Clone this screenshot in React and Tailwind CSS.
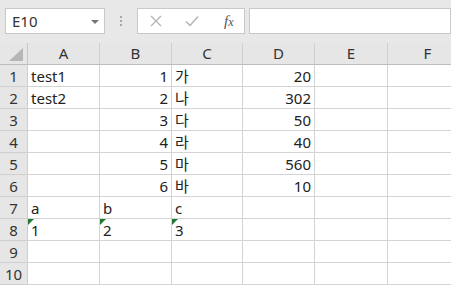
import React from 'react';

const cols = ['A', 'B', 'C', 'D', 'E', 'F'];
const widths = ['w-[72px]', 'w-[72px]', 'w-[71px]', 'w-[72px]', 'w-[73px]', 'w-[80px]'];

// cell values: [text, align, flag]
const rows = [
  [['test1'], ['1', 'r'], ['가'], ['20', 'r'], [], []],
  [['test2'], ['2', 'r'], ['나'], ['302', 'r'], [], []],
  [[], ['3', 'r'], ['다'], ['50', 'r'], [], []],
  [[], ['4', 'r'], ['라'], ['40', 'r'], [], []],
  [[], ['5', 'r'], ['마'], ['560', 'r'], [], []],
  [[], ['6', 'r'], ['바'], ['10', 'r'], [], []],
  [['a'], ['b'], ['c'], [], [], []],
  [['1', 'l', true], ['2', 'l', true], ['3', 'l', true], [], [], []],
  [[], [], [], [], [], []],
  [[], [], [], [], [], []],
];

function Cell({ value, width }) {
  const [text, align, flag] = value;
  return (
    <div
      className={`${width} relative h-[22px] shrink-0 border-r border-b border-[#d4d4d4] flex items-end ${
        align === 'r' ? 'justify-end pr-[3px]' : 'justify-start pl-[3px]'
      }`}
    >
      {flag && (
        <div className="absolute left-0 top-0 w-0 h-0 border-t-[6px] border-t-[#1e7b34] border-r-[6px] border-r-transparent" />
      )}
      <span className="leading-[19px]">{text}</span>
    </div>
  );
}

export default function App() {
  return (
    <div
      className="w-[451px] h-[287px] overflow-hidden bg-white text-[15px] text-[#222]"
      style={{ fontFamily: '"Noto Sans", "Noto Sans CJK KR", sans-serif' }}
    >
      {/* formula bar */}
      <div className="h-[43px] bg-[#e8e8e8] flex items-start pt-[8px] pl-[5px]">
        <div className="w-[100px] h-[26px] bg-white border border-[#c8c8c8] flex items-center justify-between pl-[6px] pr-[5px]">
          <span className="text-[15px] text-[#333]">E10</span>
          <div className="w-0 h-0 border-l-[4px] border-l-transparent border-r-[4px] border-r-transparent border-t-[4px] border-t-[#777] mt-[1px]" />
        </div>
        <div className="w-[32px] h-[26px] flex flex-col items-center justify-center gap-[2px]">
          <div className="w-[2px] h-[2px] bg-[#a8a8a8]" />
          <div className="w-[2px] h-[2px] bg-[#a8a8a8]" />
          <div className="w-[2px] h-[2px] bg-[#a8a8a8]" />
        </div>
        <div className="w-[108px] h-[26px] bg-white border border-[#c8c8c8] flex items-center">
          <svg width="12" height="12" viewBox="0 0 12 12" className="ml-[12px]">
            <path d="M1 1 L11 11 M11 1 L1 11" stroke="#b4b4b4" strokeWidth="1.3" fill="none" />
          </svg>
          <svg width="14" height="12" viewBox="0 0 14 12" className="ml-[23px]">
            <path d="M1 6.5 L5 10.5 L13 1.5" stroke="#b4b4b4" strokeWidth="1.5" fill="none" />
          </svg>
          <span
            className="ml-[25px] text-[15px] italic text-[#555] leading-none"
            style={{ fontFamily: '"Liberation Serif", serif' }}
          >
            f<span className="text-[12px]">x</span>
          </span>
        </div>
        <div className="ml-[4px] flex-1 h-[26px] bg-white border border-[#c8c8c8]" />
      </div>

      {/* column headers */}
      <div className="flex h-[22px] bg-[#e6e6e6] border-b border-[#bdbdbd]">
        <div className="w-[28px] shrink-0 border-r border-[#c8c8c8] relative">
          <div className="absolute right-[4px] bottom-[3px] w-0 h-0 border-l-[14px] border-l-transparent border-b-[13px] border-b-[#b6b6b6]" />
        </div>
        {cols.map((c, i) => (
          <div
            key={c}
            className={`${widths[i]} shrink-0 border-r border-[#cfcfcf] flex items-center justify-center text-[#333]`}
          >
            {c}
          </div>
        ))}
      </div>

      {/* rows */}
      {rows.map((r, ri) => (
        <div key={ri} className="flex">
          <div className="w-[28px] h-[22px] shrink-0 bg-[#e6e6e6] border-r border-b border-[#cfcfcf] flex items-end justify-center text-[#333]">
            <span className="leading-[19px]">{ri + 1}</span>
          </div>
          {r.map((v, ci) => (
            <Cell key={ci} value={v} width={widths[ci]} />
          ))}
        </div>
      ))}
    </div>
  );
}
